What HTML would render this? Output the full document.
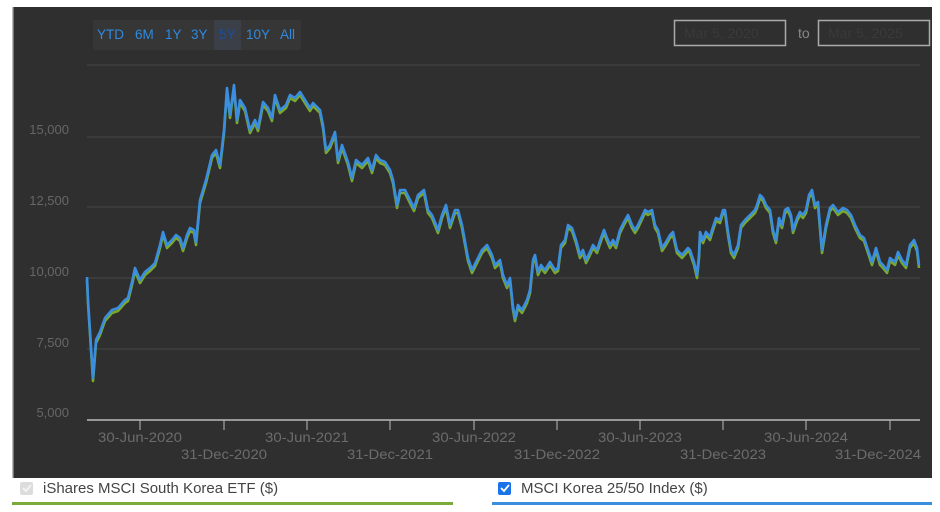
<!DOCTYPE html>
<html><head><meta charset="utf-8"><style>
html,body{margin:0;padding:0;background:#fff;width:940px;height:512px;overflow:hidden;font-family:"Liberation Sans",sans-serif}
svg{position:absolute;left:0;top:0}
</style></head><body>
<svg width="940" height="512" viewBox="0 0 940 512" xmlns="http://www.w3.org/2000/svg">
<rect x="12" y="7" width="920" height="471" fill="#2f2f2f"/>
<rect x="12" y="7" width="1.5" height="471" fill="#bbb"/>
<rect x="93" y="20" width="208" height="30" rx="2" fill="#363636"/>
<rect x="214" y="20" width="27" height="30" fill="#3a3f48"/>
<g font-size="13.5" fill="#2f8ae0" font-family="Liberation Sans, sans-serif">
<text x="97" y="39">YTD</text><text x="135" y="39">6M</text><text x="165" y="39">1Y</text>
<text x="191" y="39">3Y</text><text x="219" y="39" fill="#1b4f9e">5Y</text>
<text x="246" y="39">10Y</text><text x="280" y="39">All</text>
</g>
<rect x="674.5" y="20.5" width="111" height="25" fill="none" stroke="#aaa" stroke-width="1.5"/>
<text x="684" y="38" font-size="14" fill="#3a3a3a">Mar 5, 2020</text>
<text x="798" y="38" font-size="14" fill="#888">to</text>
<rect x="818.5" y="20.5" width="111" height="25" fill="none" stroke="#aaa" stroke-width="1.5"/>
<text x="828" y="38" font-size="14" fill="#3a3a3a">Mar 5, 2025</text>
<g stroke="#474747" stroke-width="1">
<line x1="87" y1="65" x2="920" y2="65"/><line x1="87" y1="137" x2="920" y2="137"/>
<line x1="87" y1="207" x2="920" y2="207"/><line x1="87" y1="278" x2="920" y2="278"/>
<line x1="87" y1="349" x2="920" y2="349"/>
</g>
<g font-size="13" fill="#666" text-anchor="end">
<text x="69" y="134">15,000</text><text x="69" y="205">12,500</text><text x="69" y="276">10,000</text>
<text x="69" y="347">7,500</text><text x="69" y="417">5,000</text>
</g>
<line x1="87" y1="420" x2="920" y2="420" stroke="#bbb" stroke-width="1.5"/>
<g stroke="#bbb" stroke-width="1">
<line x1="140" y1="420" x2="140" y2="430"/><line x1="224" y1="420" x2="224" y2="430"/>
<line x1="307" y1="420" x2="307" y2="430"/><line x1="390" y1="420" x2="390" y2="430"/>
<line x1="474" y1="420" x2="474" y2="430"/><line x1="557" y1="420" x2="557" y2="430"/>
<line x1="640" y1="420" x2="640" y2="430"/><line x1="723" y1="420" x2="723" y2="430"/>
<line x1="806" y1="420" x2="806" y2="430"/><line x1="890" y1="420" x2="890" y2="430"/>
</g>
<g font-size="14" fill="#6c6c6c" text-anchor="middle">
<text x="140" y="442" textLength="84" lengthAdjust="spacingAndGlyphs">30-Jun-2020</text>
<text x="224" y="459" textLength="86" lengthAdjust="spacingAndGlyphs">31-Dec-2020</text>
<text x="307" y="442" textLength="84" lengthAdjust="spacingAndGlyphs">30-Jun-2021</text>
<text x="390" y="459" textLength="86" lengthAdjust="spacingAndGlyphs">31-Dec-2021</text>
<text x="474" y="442" textLength="84" lengthAdjust="spacingAndGlyphs">30-Jun-2022</text>
<text x="557" y="459" textLength="86" lengthAdjust="spacingAndGlyphs">31-Dec-2022</text>
<text x="640" y="442" textLength="84" lengthAdjust="spacingAndGlyphs">30-Jun-2023</text>
<text x="723" y="459" textLength="86" lengthAdjust="spacingAndGlyphs">31-Dec-2023</text>
<text x="806" y="442" textLength="84" lengthAdjust="spacingAndGlyphs">30-Jun-2024</text>
<text x="878" y="459" textLength="86" lengthAdjust="spacingAndGlyphs">31-Dec-2024</text>
</g>
<defs>
<polyline id="s" fill="none" stroke-width="2.6" stroke-linejoin="round" points="87,277 88,300 93,378 96,340 100,332 105,318 112,310 118,308 125,300 128,298 132,282 135,268 140,280 145,272 150,268 155,263 160,245 163,232 167,245 172,240 176,235 180,238 183,248 187,235 190,228 194,230 196,242 200,200 206,180 212,155 216,150 220,165 224,130 227,88 230,115 234,85 237,120 240,100 245,108 250,130 255,120 258,128 263,102 268,108 272,118 275,95 280,110 286,105 290,95 295,98 300,92 305,100 310,108 313,103 320,110 323,125 326,150 330,145 335,132 338,160 342,145 348,162 352,178 356,160 362,165 368,158 372,170 376,155 380,160 385,162 390,170 393,180 397,205 400,190 405,190 410,200 414,208 418,195 424,190 428,210 432,215 438,230 442,215 446,205 450,225 455,210 458,210 462,225 468,258 472,270 476,262 482,250 487,245 492,255 495,265 500,260 503,275 507,285 510,278 513,307 515,318 518,305 522,310 527,300 530,290 533,260 535,255 538,272 541,265 545,270 550,262 555,270 558,268 561,245 565,240 568,225 572,228 576,240 580,255 583,250 586,260 590,252 593,245 597,250 601,238 604,230 607,238 610,245 613,240 616,245 620,230 624,222 628,215 632,225 635,230 638,225 645,210 648,212 652,210 655,225 658,230 662,248 666,242 670,235 673,232 677,250 682,255 688,248 690,250 694,262 697,275 699,255 700,232 703,240 706,232 710,237 712,230 716,218 720,220 723,210 725,210 728,232 731,250 734,255 738,245 741,225 745,220 750,215 755,210 757,205 760,195 763,198 766,205 770,210 773,230 776,240 779,218 782,225 785,210 788,208 791,215 793,230 797,218 800,212 803,215 806,210 809,195 812,190 815,205 818,202 822,250 826,225 830,208 833,205 838,212 843,208 847,210 851,215 855,225 860,235 864,238 868,250 872,262 876,248 880,262 883,265 887,270 890,258 895,262 898,252 902,260 906,265 910,245 914,240 917,248 919,265"/>
</defs>
<use href="#s" stroke="#7aa82f" transform="translate(0,3)"/>
<use href="#s" stroke="#3a8ee0"/>
<rect x="20" y="482" width="13" height="13" rx="2" fill="#dcdcdc"/>
<path d="M23 488 l3 3 l5 -6" fill="none" stroke="#f4f4f4" stroke-width="1.8"/>
<text x="43" y="493" font-size="15" fill="#444">iShares MSCI South Korea ETF ($)</text>
<rect x="12" y="502" width="441" height="3" fill="#7aab3a"/>
<rect x="498" y="482" width="13" height="13" rx="2" fill="#1a73e8"/>
<path d="M501 488 l3 3 l5 -6" fill="none" stroke="#fff" stroke-width="1.8"/>
<text x="521" y="493" font-size="15" fill="#444">MSCI Korea 25/50 Index ($)</text>
<rect x="492" y="502" width="440" height="3" fill="#3a8ee0"/>
</svg>
</body></html>
